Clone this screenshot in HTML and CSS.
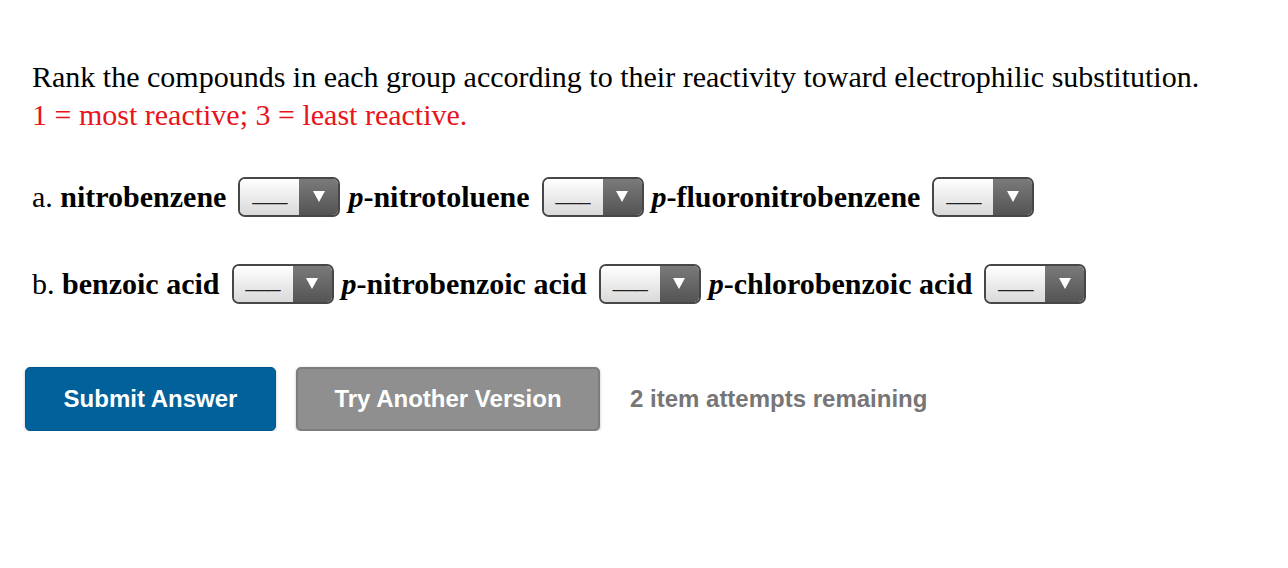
FILE: index.html
```html
<!DOCTYPE html>
<html>
<head>
<meta charset="utf-8">
<link rel="stylesheet" href="styles.css">
</head>
<body>
<div class="page">
  <div class="question">
    <p class="prompt">Rank the compounds in each group according to their reactivity toward electrophilic substitution.</p>
    <p class="note">1 = most reactive; 3 = least reactive.</p>
  </div>

  <div class="group group-a">
    <span class="label">a. <b>nitrobenzene</b></span>
    <span class="select"><span class="sel-val">___</span><span class="sel-btn"><span class="tri"></span></span></span>
    <span class="label"><b><i>p</i>-nitrotoluene</b></span>
    <span class="select"><span class="sel-val">___</span><span class="sel-btn"><span class="tri"></span></span></span>
    <span class="label"><b><i>p</i>-fluoronitrobenzene</b></span>
    <span class="select"><span class="sel-val">___</span><span class="sel-btn"><span class="tri"></span></span></span>
  </div>

  <div class="group group-b">
    <span class="label">b. <b>benzoic acid</b></span>
    <span class="select"><span class="sel-val">___</span><span class="sel-btn"><span class="tri"></span></span></span>
    <span class="label"><b><i>p</i>-nitrobenzoic acid</b></span>
    <span class="select"><span class="sel-val">___</span><span class="sel-btn"><span class="tri"></span></span></span>
    <span class="label"><b><i>p</i>-chlorobenzoic acid</b></span>
    <span class="select"><span class="sel-val">___</span><span class="sel-btn"><span class="tri"></span></span></span>
  </div>

  <div class="actions">
    <button class="btn btn-submit">Submit Answer</button>
    <button class="btn btn-try">Try Another Version</button>
    <span class="attempts">2 item attempts remaining</span>
  </div>
</div>
</body>
</html>
```

FILE: styles.css
```css
html, body {
  margin: 0;
  padding: 0;
  background: #ffffff;
}

.page {
  padding: 58px 0 0 32px;
  font-family: "Liberation Serif", "Times New Roman", serif;
  color: #000;
}

.question p {
  margin: 0;
  font-size: 30px;
  line-height: 38px;
}

.note {
  color: #e8141b;
}

.group {
  display: flex;
  align-items: center;
  font-size: 30px;
  height: 40px;
}

.group-a {
  margin-top: 43px;
}

.group-b {
  margin-top: 47px;
}

.label {
  white-space: nowrap;
}

.label b {
  font-weight: bold;
}

.select {
  display: inline-flex;
  box-sizing: border-box;
  width: 102px;
  height: 40px;
  margin: 0 8px 0 12px;
  border: 2px solid #474747;
  border-radius: 7px;
  overflow: hidden;
}

.sel-val {
  flex: 0 0 59px;
  background: linear-gradient(#ffffff, #d9d9d9);
  font-family: "Liberation Sans", Arial, sans-serif;
  font-size: 21px;
  line-height: 1;
  color: #222;
  display: flex;
  align-items: flex-end;
  justify-content: center;
  padding-bottom: 12px;
  box-sizing: border-box;
}

.sel-btn {
  flex: 1;
  background: linear-gradient(#7a7a7a, #545454);
  display: flex;
  align-items: center;
  justify-content: center;
}

.tri {
  width: 0;
  height: 0;
  margin-top: -1px;
  border-left: 6px solid transparent;
  border-right: 6px solid transparent;
  border-top: 11px solid #ffffff;
}

.actions {
  display: flex;
  align-items: center;
  margin-top: 63px;
  margin-left: -7px;
  font-family: "Liberation Sans", Arial, sans-serif;
}

.btn {
  font-family: "Liberation Sans", Arial, sans-serif;
  font-weight: bold;
  font-size: 24px;
  color: #ffffff;
  height: 64px;
  border-radius: 5px;
  cursor: pointer;
  box-sizing: border-box;
  box-shadow: 0 1px 3px rgba(0,0,0,0.25);
}

.btn-submit {
  width: 251px;
  background: #01619b;
  border: 1px solid #01588d;
}

.btn-try {
  width: 304px;
  margin-left: 20px;
  background: #8f8f8f;
  border: 2px solid #7d7d7d;
}

.attempts {
  margin-left: 30px;
  font-weight: bold;
  font-size: 24px;
  color: #767676;
}
```
